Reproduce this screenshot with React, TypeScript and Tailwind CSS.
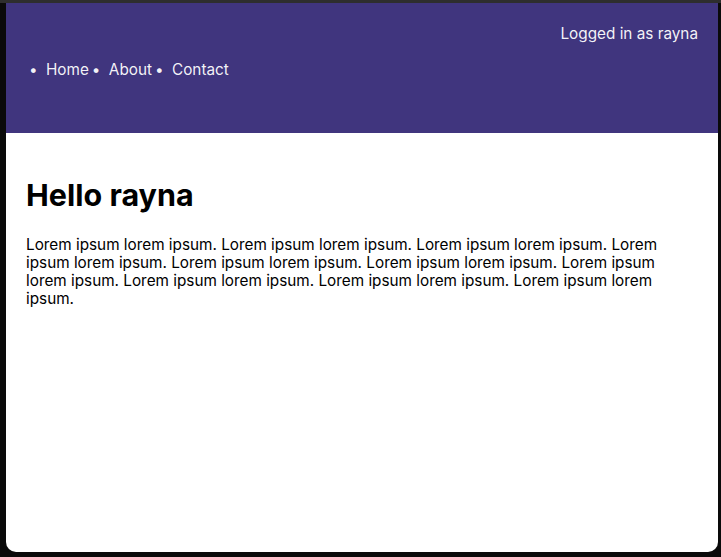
export default function App() {
  const links = ['Home', 'About', 'Contact'];
  return (
    <div className="w-[721px] h-[557px] bg-[#0a0a0a] flex flex-col" style={{ fontFamily: 'Inter, "Noto Sans", sans-serif' }}>
      <div className="h-[3px] bg-[#2e2e2e]" />
      <div className="flex-1 flex pl-[6px] pr-[3px] pb-[5px]">
        <div className="flex-1 flex flex-col bg-white rounded-b-[10px] overflow-hidden">
          <header className="h-[130px] bg-[#40357e] px-5 pt-[19px] text-white/95">
            <div className="flex justify-end">
              <span className="text-[15.3px] leading-6">Logged in as rayna</span>
            </div>
            <ul className="mt-3 flex pl-[3px] text-[15.3px] leading-6">
              {links.map(l => (
                <li key={l} className="flex items-center">
                  <span className="w-[6px] text-center">•</span>
                  <span className="ml-[11px] mr-[3px]">{l}</span>
                </li>
              ))}
            </ul>
          </header>
          <main className="px-5 pt-[43px] text-black">
            <h1 className="text-[30.5px] leading-[38px] font-bold">Hello rayna</h1>
            <p className="mt-[22px] text-[15.3px] leading-[18px]">
              Lorem ipsum lorem ipsum. Lorem ipsum lorem ipsum. Lorem ipsum lorem ipsum. Lorem ipsum lorem ipsum. Lorem ipsum lorem ipsum. Lorem ipsum lorem ipsum. Lorem ipsum lorem ipsum. Lorem ipsum lorem ipsum. Lorem ipsum lorem ipsum. Lorem ipsum lorem ipsum.
            </p>
          </main>
        </div>
      </div>
    </div>
  );
}
